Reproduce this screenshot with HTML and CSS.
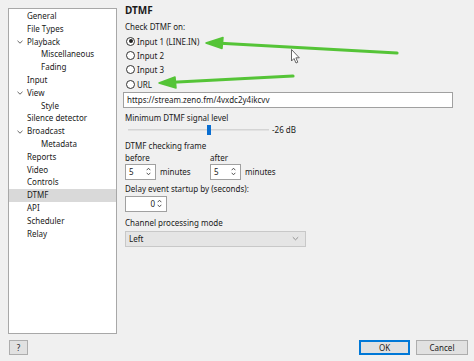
FILE: index.html
```html
<!DOCTYPE html>
<html>
<head>
<meta charset="utf-8">
<link rel="stylesheet" href="styles.css">
</head>
<body>
<div class="dialog">
  <div class="main">
    <div class="tree">
      <div class="item">General</div>
      <div class="item">File Types</div>
      <div class="item"><span class="chev"><svg width="6" height="4" viewBox="0 0 6 4"><path d="M0.5 0.8 L3 3.2 L5.5 0.8" fill="none" stroke="#555" stroke-width="0.9"/></svg></span>Playback</div>
      <div class="item sub">Miscellaneous</div>
      <div class="item sub">Fading</div>
      <div class="item">Input</div>
      <div class="item"><span class="chev"><svg width="6" height="4" viewBox="0 0 6 4"><path d="M0.5 0.8 L3 3.2 L5.5 0.8" fill="none" stroke="#555" stroke-width="0.9"/></svg></span>View</div>
      <div class="item sub">Style</div>
      <div class="item">Silence detector</div>
      <div class="item"><span class="chev"><svg width="6" height="4" viewBox="0 0 6 4"><path d="M0.5 0.8 L3 3.2 L5.5 0.8" fill="none" stroke="#555" stroke-width="0.9"/></svg></span>Broadcast</div>
      <div class="item sub">Metadata</div>
      <div class="item">Reports</div>
      <div class="item">Video</div>
      <div class="item">Controls</div>
      <div class="item selected">DTMF</div>
      <div class="item">API</div>
      <div class="item">Scheduler</div>
      <div class="item">Relay</div>
    </div>
    <div class="content">
      <div class="title">DTMF</div>
      <div class="label m4">Check DTMF on:</div>
      <div class="radios">
        <div class="radio"><span class="circle checked"></span>Input 1 (LINE.IN)</div>
        <div class="radio"><span class="circle"></span>Input 2</div>
        <div class="radio"><span class="circle"></span>Input 3</div>
        <div class="radio"><span class="circle"></span>URL</div>
      </div>
      <div class="textbox">https://stream.zeno.fm/4vxdc2y4ikcvv</div>
      <div class="label m4">Minimum DTMF signal level</div>
      <div class="sliderrow">
        <div class="slider"><div class="track"></div><div class="thumb"></div></div>
        <span class="db">-26 dB</span>
      </div>
      <div class="label m4">DTMF checking frame</div>
      <div class="frame">
        <div class="fcol">
          <div class="label">before</div>
          <div class="spinrow"><div class="spin"><span class="val">5</span><span class="arrows"><svg width="5" height="9" viewBox="0 0 5 9"><path d="M0.7 3.2 L2.5 1.2 L4.3 3.2 M0.7 5.8 L2.5 7.8 L4.3 5.8" fill="none" stroke="#444" stroke-width="0.9"/></svg></span></div><span class="unit">minutes</span></div>
        </div>
        <div class="fcol">
          <div class="label">after</div>
          <div class="spinrow"><div class="spin"><span class="val">5</span><span class="arrows"><svg width="5" height="9" viewBox="0 0 5 9"><path d="M0.7 3.2 L2.5 1.2 L4.3 3.2 M0.7 5.8 L2.5 7.8 L4.3 5.8" fill="none" stroke="#444" stroke-width="0.9"/></svg></span></div><span class="unit">minutes</span></div>
        </div>
      </div>
      <div class="label m3">Delay event startup by (seconds):</div>
      <div class="spin wide"><span class="val right">0</span><span class="arrows"><svg width="5" height="9" viewBox="0 0 5 9"><path d="M0.7 3.2 L2.5 1.2 L4.3 3.2 M0.7 5.8 L2.5 7.8 L4.3 5.8" fill="none" stroke="#444" stroke-width="0.9"/></svg></span></div>
      <div class="label m5">Channel processing mode</div>
      <div class="select"><span>Left</span><svg width="7" height="5" viewBox="0 0 7 5"><path d="M0.8 1.2 L3.5 3.8 L6.2 1.2" fill="none" stroke="#888" stroke-width="0.9"/></svg></div>
    </div>
  </div>
  <div class="footer">
    <div class="btn help">?</div>
    <div class="spacer"></div>
    <div class="btn ok">OK</div>
    <div class="btn cancel">Cancel</div>
  </div>
</div>
<svg class="overlay" width="474" height="361" viewBox="0 0 474 361">
  <g stroke="#55c437" stroke-width="3.2" stroke-linecap="round" fill="#55c437">
    <line x1="216" y1="43" x2="397" y2="53"/>
    <path d="M206 43 L223 37.5 L222 48.5 Z" stroke-width="1.5" stroke-linejoin="round"/>
    <line x1="168" y1="82.5" x2="293" y2="76"/>
    <path d="M159 83 L175 77 L176 88 Z" stroke-width="1.5" stroke-linejoin="round"/>
  </g>
  <path d="M291.5 49.5 L291.5 61 L294 58.5 L296 63 L297.8 62.2 L295.9 57.8 L299.3 57.8 Z" fill="#fff" stroke="#555" stroke-width="0.9" stroke-linejoin="round"/>
</svg>
</body>
</html>
```
FILE: styles.css
```css
* { box-sizing: border-box; }
html, body {
  margin: 0;
  padding: 0;
  background: #f0f0f0;
}
body {
  width: 474px;
  height: 361px;
  overflow: hidden;
  position: relative;
  font-family: "Noto Sans", "Open Sans", sans-serif;
  font-size: 8px;
  color: #1a1a1a;
}
.dialog {
  display: flex;
  flex-direction: column;
  height: 361px;
}
.main {
  display: flex;
  padding-left: 8px;
}
.tree {
  width: 109px;
  height: 326px;
  margin-top: 8px;
  background: #fff;
  border: 1px solid #a8a8a8;
  padding-top: 1px;
  flex-shrink: 0;
}
.item {
  height: 12.8px;
  line-height: 12.8px;
  padding-left: 18px;
  position: relative;
  white-space: nowrap;
}
.item.sub { padding-left: 32px; }
.item.selected { background: #d9d9d9; }
.chev {
  position: absolute;
  left: 8px;
  top: 0;
  height: 12.8px;
  display: flex;
  align-items: center;
}
.content {
  padding-left: 8px;
  padding-top: 3px;
  flex: 1;
}
.title {
  font-weight: bold;
  font-size: 10px;
  line-height: 14px;
}
.label {
  line-height: 12px;
  height: 12px;
  white-space: nowrap;
}
.m3 { margin-top: 3px; }
.m4 { margin-top: 4px; }
.m5 { margin-top: 5px; }
.radios {
  display: flex;
  flex-direction: column;
  margin-top: 1px;
}
.radio {
  display: flex;
  align-items: center;
  height: 14.4px;
  padding-left: 1px;
}
.circle {
  width: 9px;
  height: 9px;
  border: 1px solid #333;
  border-radius: 50%;
  background: #fff;
  margin-right: 2px;
  position: relative;
}
.circle.checked::after {
  content: "";
  position: absolute;
  left: 1.5px;
  top: 1.5px;
  width: 4px;
  height: 4px;
  border-radius: 50%;
  background: #222;
}
.textbox {
  margin-left: -2px;
  width: 330px;
  height: 16px;
  background: #fff;
  border: 1px solid #a0a0a0;
  line-height: 14px;
  padding-left: 3px;
}
.sliderrow {
  display: flex;
  align-items: center;
  height: 12px;
}
.slider {
  position: relative;
  width: 141px;
  height: 12px;
  margin-left: 3px;
}
.track {
  position: absolute;
  left: 0;
  right: 0;
  top: 5px;
  height: 2px;
  background: #e2e2e2;
  border-top: 1px solid #d4d4d4;
}
.thumb {
  position: absolute;
  left: 79px;
  top: 1px;
  width: 4px;
  height: 10px;
  background: #0a6ed1;
}
.db {
  margin-left: 3px;
}
.frame {
  display: flex;
}
.fcol {
  width: 85px;
}
.spin {
  display: flex;
  align-items: center;
  width: 31px;
  height: 16px;
  background: #fff;
  border: 1px solid #a0a0a0;
  padding-left: 3px;
  padding-right: 4px;
}
.spinrow {
  display: flex;
  align-items: center;
}
.spin .val { flex: 1; }
.spin .val.right { text-align: right; padding-right: 2px; }
.arrows { display: flex; align-items: center; }
.spin.wide { width: 42px; margin-top: 1px; }
.unit { margin-left: 4px; }
.select {
  margin-top: 2px;
  width: 181px;
  height: 16px;
  background: #e5e5e5;
  border: 1px solid #c8c8c8;
  display: flex;
  align-items: center;
  justify-content: space-between;
  padding: 0 6px 0 3px;
}
.footer {
  display: flex;
  align-items: center;
  padding: 6px 6px 0 9px;
}
.spacer { flex: 1; }
.btn {
  height: 15px;
  border: 1px solid #adadad;
  background: #e1e1e1;
  display: flex;
  align-items: center;
  justify-content: center;
}
.help { width: 19px; }
.ok {
  width: 51px;
  border: 1px solid #0078d7;
  box-shadow: inset 0 0 0 1px #0078d7;
  margin-right: 6px;
}
.cancel { width: 52px; }
.overlay {
  position: absolute;
  left: 0;
  top: 0;
  pointer-events: none;
}
```
